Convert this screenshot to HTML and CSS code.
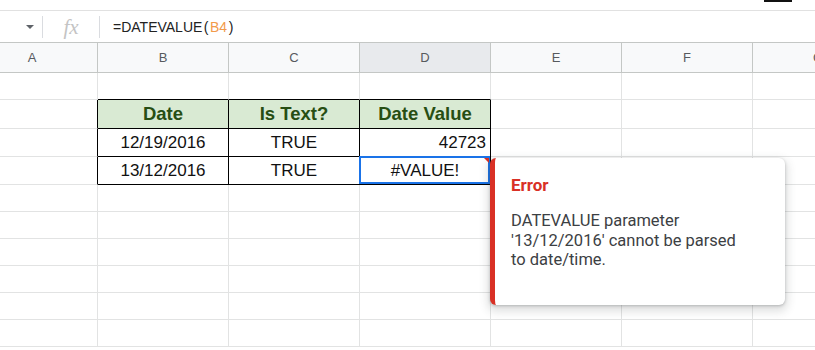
FILE: index.html
```html
<!DOCTYPE html>
<html>

<head>
    <title>DATEVALUE error</title>
    <link rel="stylesheet" href="styles.css">
</head>

<body>
    <div class="top-strip">
        <span class="account-bar"></span>
    </div>

    <div class="formula-bar">
        <div class="name-box"><span class="caret"></span></div>
        <span class="sep"></span>
        <div class="fx">fx</div>
        <span class="sep"></span>
        <div class="formula">=DATEVALUE<span class="paren">(</span><span class="ref">B4</span><span class="paren">)</span></div>
    </div>

    <div class="sheet">
        <div class="grid">
            <!-- column headers -->
            <div class="col-head">A</div>
            <div class="col-head">B</div>
            <div class="col-head">C</div>
            <div class="col-head active">D</div>
            <div class="col-head">E</div>
            <div class="col-head">F</div>
            <div class="col-head">G</div>

            <!-- row 1 -->
            <div class="cell"></div>
            <div class="cell edge-b"></div>
            <div class="cell edge-b"></div>
            <div class="cell edge-b"></div>
            <div class="cell"></div>
            <div class="cell"></div>
            <div class="cell"></div>

            <!-- row 2 -->
            <div class="cell edge-r"></div>
            <div class="cell box th">Date</div>
            <div class="cell box th">Is Text?</div>
            <div class="cell box th">Date Value</div>
            <div class="cell"></div>
            <div class="cell"></div>
            <div class="cell"></div>

            <!-- row 3 -->
            <div class="cell edge-r"></div>
            <div class="cell box">12/19/2016</div>
            <div class="cell box">TRUE</div>
            <div class="cell box num">42723</div>
            <div class="cell"></div>
            <div class="cell"></div>
            <div class="cell"></div>

            <!-- row 4 -->
            <div class="cell edge-r"></div>
            <div class="cell box">13/12/2016</div>
            <div class="cell box">TRUE</div>
            <div class="cell box selected">
                #VALUE!
                <div class="error-popup">
                    <div class="error-title">Error</div>
                    <div class="error-text">DATEVALUE parameter<br>'13/12/2016' cannot be parsed<br>to date/time.</div>
                </div>
            </div>
            <div class="cell"></div>
            <div class="cell"></div>
            <div class="cell"></div>

            <!-- empty rows -->
            <div class="cell"></div><div class="cell"></div><div class="cell"></div><div class="cell"></div><div class="cell"></div><div class="cell"></div><div class="cell"></div>
            <div class="cell"></div><div class="cell"></div><div class="cell"></div><div class="cell"></div><div class="cell"></div><div class="cell"></div><div class="cell"></div>
            <div class="cell"></div><div class="cell"></div><div class="cell"></div><div class="cell"></div><div class="cell"></div><div class="cell"></div><div class="cell"></div>
            <div class="cell"></div><div class="cell"></div><div class="cell"></div><div class="cell"></div><div class="cell"></div><div class="cell"></div><div class="cell"></div>
            <div class="cell"></div><div class="cell"></div><div class="cell"></div><div class="cell"></div><div class="cell"></div><div class="cell"></div><div class="cell"></div>
            <div class="cell"></div><div class="cell"></div><div class="cell"></div><div class="cell"></div><div class="cell"></div><div class="cell"></div><div class="cell"></div>
        </div>
    </div>
</body>

</html>
```

FILE: styles.css
```css
body {
    margin: 0;
    width: 815px;
    height: 350px;
    overflow: hidden;
    background: #fff;
    font-family: "Liberation Sans", Arial, sans-serif;
    color: #000;
}

.top-strip {
    height: 10px;
    border-bottom: 1px solid #e1e1e1;
    display: flex;
    justify-content: flex-end;
    padding-right: 23px;
}

.account-bar {
    width: 28px;
    height: 2px;
    background: #111;
}

/* formula bar */
.formula-bar {
    height: 31px;
    display: flex;
    align-items: center;
}

.name-box {
    width: 42px;
    display: flex;
    justify-content: flex-end;
    padding-right: 8px;
    box-sizing: border-box;
}

.caret {
    width: 0;
    height: 0;
    border-left: 4px solid transparent;
    border-right: 4px solid transparent;
    border-top: 4px solid #5f6368;
}

.sep {
    width: 1px;
    height: 22px;
    background: #dadce0;
}

.fx {
    width: 56px;
    text-align: center;
    font-family: "Liberation Serif", serif;
    font-style: italic;
    font-size: 21px;
    color: #c4c4c4;
    line-height: 22px;
}

.formula {
    padding-left: 13px;
    padding-top: 1px;
    font-size: 14px;
    color: #222;
}

.paren {
    margin: 0 1.5px;
}

.ref {
    color: #f29a4a;
}

/* sheet grid */
.sheet {
    width: 815px;
    overflow: hidden;
}

.grid {
    margin-left: -33px;
    display: grid;
    grid-template-columns: repeat(7, 131px);
    grid-template-rows: 31px 27px 29px 28px 28px repeat(6, 27px);
}

.col-head {
    box-sizing: border-box;
    background: #f8f9fa;
    border-top: 1px solid #c4c7c5;
    border-bottom: 1px solid #c4c7c5;
    border-right: 1px solid #c4c7c5;
    display: flex;
    align-items: center;
    justify-content: center;
    font-size: 13px;
    color: #575a5e;
}

.col-head.active {
    background: #e8eaed;
}

.cell {
    box-sizing: border-box;
    border-right: 1px solid #e2e3e3;
    border-bottom: 1px solid #e2e3e3;
    display: flex;
    align-items: center;
    justify-content: center;
    font-size: 17px;
    color: #111;
}

.cell.edge-b {
    border-bottom-color: #000;
}

.cell.edge-r {
    border-right-color: #000;
}

.cell.box {
    border-right-color: #000;
    border-bottom-color: #000;
}

.cell.th {
    background: #d9ead3;
    color: #274e13;
    font-size: 18.5px;
    font-weight: bold;
}

.cell.num {
    justify-content: flex-end;
    padding-right: 4px;
}

.cell.selected {
    position: relative;
}

.cell.selected::after {
    content: "";
    position: absolute;
    top: -1px;
    left: -1px;
    right: 0;
    bottom: 0;
    border: 2px solid #1a73e8;
}

.cell.selected::before {
    content: "";
    position: absolute;
    top: 1px;
    right: 1px;
    border-top: 5px solid #d93025;
    border-left: 5px solid transparent;
    z-index: 1;
}

/* error tooltip */
.error-popup {
    position: absolute;
    left: 130px;
    top: 1px;
    width: 295px;
    height: 147px;
    box-sizing: border-box;
    background: #fff;
    border-left: 5px solid #d93025;
    border-radius: 6px;
    box-shadow: 0 1px 3px rgba(60, 64, 67, 0.3), 0 4px 8px 3px rgba(60, 64, 67, 0.15);
    padding: 17px 16px 0 16px;
    font-family: Roboto, "Liberation Sans", sans-serif;
    text-align: left;
    z-index: 2;
}

.error-title {
    font-size: 17px;
    line-height: 20px;
    font-weight: bold;
    color: #d93025;
    margin-bottom: 16px;
}

.error-text {
    font-size: 16.5px;
    line-height: 19.5px;
    color: #3c4043;
}
```
